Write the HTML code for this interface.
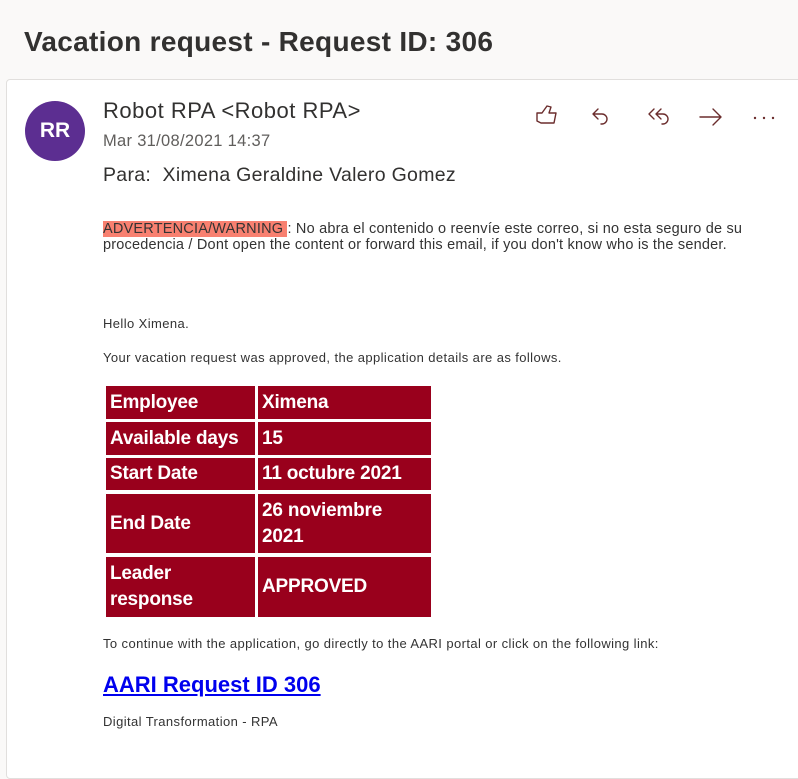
<!DOCTYPE html>
<html><head><meta charset="utf-8"><style>
*{margin:0;padding:0;box-sizing:border-box}
body{width:798px;height:739px;background:#faf9f8;font-family:"Liberation Sans",sans-serif;position:relative;overflow:hidden;color:#323130}
.a{position:absolute;white-space:nowrap}
.card{position:absolute;left:6px;top:79px;width:800px;height:700px;background:#fff;border:1px solid #e1dfdd;border-radius:4px}
.td{position:absolute;background:#99001c;color:#fff;font-weight:bold;font-size:19px;padding-left:4px;display:flex;align-items:center;line-height:26px;letter-spacing:-0.2px}
.sm{font-size:13px;color:#333;letter-spacing:0.4px}
</style></head><body>
<div class="a" style="left:24px;top:26px;font-size:28px;font-weight:bold;color:#323130;letter-spacing:0.3px">Vacation request - Request ID: 306</div>
<div class="card"></div>
<div class="a" style="left:25px;top:101px;width:60px;height:60px;border-radius:50%;background:#5c2e91;color:#fff;font-size:21px;font-weight:bold;display:flex;align-items:center;justify-content:center">RR</div>
<div class="a" style="left:103px;top:98px;font-size:22px;color:#323130;letter-spacing:0.5px">Robot RPA &lt;Robot RPA&gt;</div>
<div class="a" style="left:103px;top:132px;font-size:16.5px;color:#605e5c;letter-spacing:0.3px">Mar 31/08/2021 14:37</div>
<div class="a" style="left:103px;top:164px;font-size:19.5px;color:#323130;letter-spacing:0.3px">Para:&nbsp; Ximena Geraldine Valero Gomez</div>
<svg class="a" style="left:530px;top:100px" width="260" height="36" viewBox="0 0 260 36" fill="none" stroke="#6b2d2d" stroke-width="1.4" stroke-linecap="round" stroke-linejoin="round">
<path d="M7 13h5l5-7 4 1-2 6h7l-2 10H11l-4-2z"/>
<path d="M68 9l-5 5 5 5M63 14h9a5 5 0 0 1 0 10h-1"/>
<path d="M124 9l-5 5 5 5M131 9l-5 5 5 5M126 14h7a5 5 0 0 1 0 10h-1"/>
<path d="M170 17h21M183 9l8 8-8 8"/>
<g fill="#6b2d2d" stroke="none"><circle cx="225" cy="18" r="1.2"/><circle cx="234" cy="18" r="1.2"/><circle cx="243" cy="18" r="1.2"/></g>
</svg>
<div class="a" style="left:103px;top:221px;font-size:14.5px;line-height:16px;color:#333;letter-spacing:0.2px"><span style="background:#f88070">ADVERTENCIA/WARNING </span>: No abra el contenido o reenvíe este correo, si no esta seguro de su<br>procedencia / Dont open the content or forward this email, if you don't know who is the sender.</div>
<div class="a sm" style="left:103px;top:316px">Hello Ximena.</div>
<div class="a sm" style="left:103px;top:350px">Your vacation request was approved, the application details are as follows.</div>
<div class="td" style="left:106px;top:386px;width:149px;height:33px">Employee</div>
<div class="td" style="left:258px;top:386px;width:173px;height:33px">Ximena</div>
<div class="td" style="left:106px;top:422px;width:149px;height:33px">Available days</div>
<div class="td" style="left:258px;top:422px;width:173px;height:33px">15</div>
<div class="td" style="left:106px;top:458px;width:149px;height:32px">Start Date</div>
<div class="td" style="left:258px;top:458px;width:173px;height:32px">11 octubre 2021</div>
<div class="td" style="left:106px;top:494px;width:149px;height:59px">End Date</div>
<div class="td" style="left:258px;top:494px;width:173px;height:59px">26 noviembre<br>2021</div>
<div class="td" style="left:106px;top:557px;width:149px;height:60px">Leader<br>response</div>
<div class="td" style="left:258px;top:557px;width:173px;height:60px">APPROVED</div>
<div class="a sm" style="left:103px;top:636px">To continue with the application, go directly to the AARI portal or click on the following link:</div>
<div class="a" style="left:103px;top:672px;font-size:22px;font-weight:bold;color:#0000ee;text-decoration:underline">AARI Request ID 306</div>
<div class="a sm" style="left:103px;top:714px">Digital Transformation - RPA</div>
</body></html>
